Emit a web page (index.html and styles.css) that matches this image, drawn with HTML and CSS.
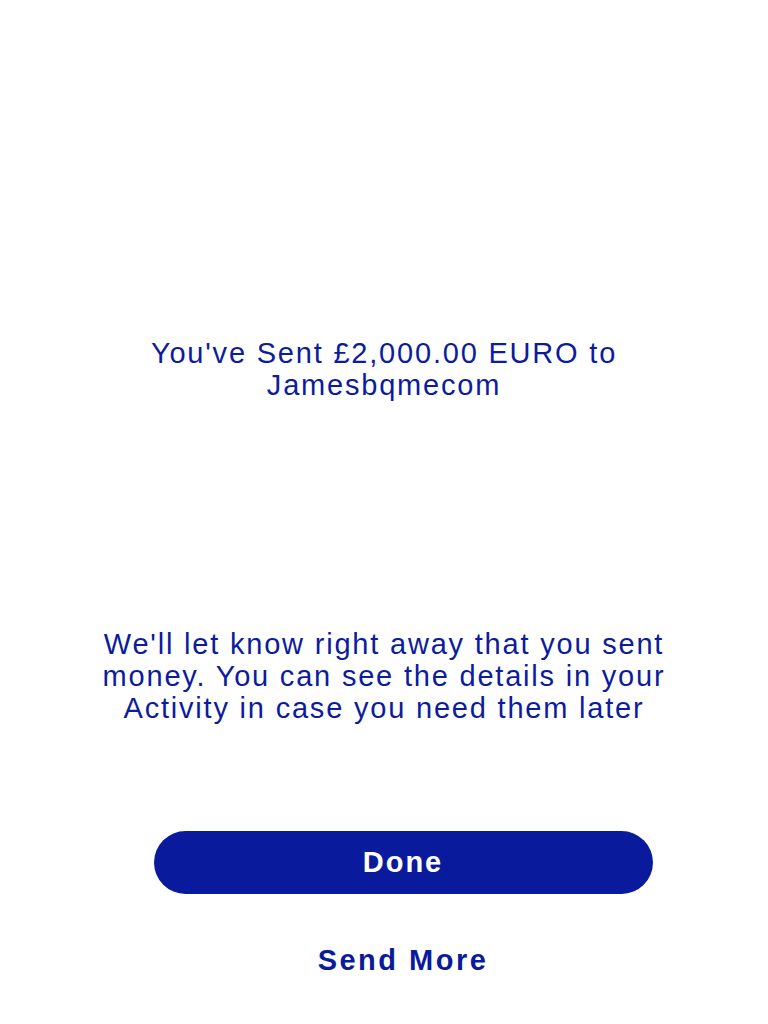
FILE: index.html
```html
<!DOCTYPE html>
<html lang="en">

<head>
    <meta charset="UTF-8">
    <meta name="viewport" content="width=device-width, initial-scale=1.0">
    <title>Money sent</title>
    <link rel="stylesheet" href="styles.css">
</head>

<body>
    <main class="sent">
        <h1 class="sent-title">You've Sent £2,000.00 EURO to Jamesbqmecom</h1>
        <p class="sent-info">We'll let know right away that you sent money. You can see the details in your Activity in case you need them later</p>
        <div class="actions">
            <button type="button" class="done-btn">Done</button>
            <a href="#" class="more-link">Send More</a>
        </div>
    </main>
</body>

</html>
```

FILE: styles.css
```css
* {
    padding: 0px;
    margin: 0px;
    box-sizing: border-box;
}

body {
    background-color: #ffffff;
    font-family: 'Liberation Sans', Arial, Helvetica, sans-serif;
    color: #0c1c9c;
}

.sent {
    width: 768px;
    height: 1024px;
    display: flex;
    flex-direction: column;
    align-items: center;
    padding-top: 337px;
}

.sent-title {
    width: 580px;
    font-size: 29px;
    font-weight: normal;
    line-height: 32px;
    letter-spacing: 1.8px;
    text-align: center;
}

.sent-info {
    width: 580px;
    margin-top: 227px;
    font-size: 29px;
    line-height: 32px;
    letter-spacing: 1.8px;
    text-align: center;
}

.actions {
    display: flex;
    flex-direction: column;
    align-items: center;
    margin-top: 107px;
    padding-left: 38px;
}

.done-btn {
    width: 499px;
    height: 63px;
    border: none;
    border-radius: 32px;
    background-color: #0a1a9c;
    color: #ffffff;
    font-family: inherit;
    font-size: 29px;
    font-weight: bold;
    letter-spacing: 2px;
    cursor: pointer;
}

.more-link {
    margin-top: 50px;
    font-size: 29px;
    font-weight: bold;
    line-height: 32px;
    letter-spacing: 2.5px;
    color: #0a1a9c;
    text-decoration: none;
}
```
